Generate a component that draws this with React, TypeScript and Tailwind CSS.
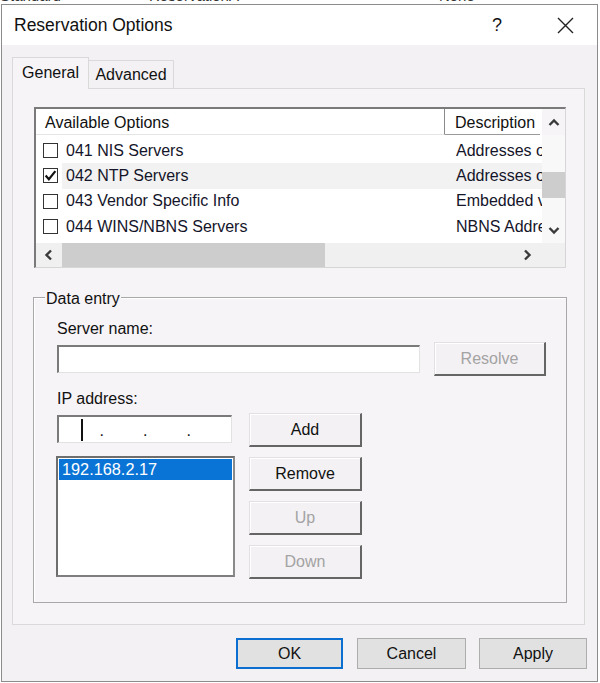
import React from "react";

function Chev({ dir, className = "" }: { dir: "up" | "down" | "left" | "right"; className?: string }) {
  const d =
    dir === "up"
      ? "M1.5 8 L6 3.5 L10.5 8"
      : dir === "down"
      ? "M1.5 4 L6 8.5 L10.5 4"
      : dir === "left"
      ? "M8 1.5 L3.5 6 L8 10.5"
      : "M4 1.5 L8.5 6 L4 10.5";
  return (
    <svg width="12" height="12" viewBox="0 0 12 12" className={className}>
      <path d={d} fill="none" stroke="#3a3a3a" strokeWidth="2.4" />
    </svg>
  );
}

function ClassicBtn({
  children,
  disabled = false,
  w = "w-[113px]",
}: {
  children: React.ReactNode;
  disabled?: boolean;
  w?: string;
}) {
  return (
    <div
      className={`${w} h-[34px] flex items-center justify-center bg-[#f3f1f4] border-t border-l border-t-[#e2e0e3] border-l-[#e2e0e3] border-r-2 border-b-2 border-r-[#656565] border-b-[#656565] shadow-[inset_1px_1px_0_#ffffff] text-[16px] ${
        disabled ? "text-[#a3a3a3]" : "text-[#111111]"
      }`}
    >
      {children}
    </div>
  );
}

function FlatBtn({ children, primary = false, w }: { children: React.ReactNode; primary?: boolean; w: string }) {
  return (
    <div
      className={`${w} h-[31px] flex items-center justify-center bg-[#e1e1e1] text-[16px] text-[#111111] ${
        primary ? "border-2 border-[#0a6fd1]" : "border border-[#adadad]"
      }`}
    >
      {children}
    </div>
  );
}

function CheckBox({ checked = false }: { checked?: boolean }) {
  return (
    <div className="w-[15px] h-[15px] border border-[#333333] bg-white flex items-center justify-center">
      {checked && (
        <svg width="13" height="13" viewBox="0 0 12 12">
          <path d="M1.5 6 L4.5 9.5 L10.5 2" fill="none" stroke="#111111" strokeWidth="2" />
        </svg>
      )}
    </div>
  );
}

const rows = [
  { name: "041 NIS Servers", desc: "Addresses of NIS servers", checked: false, hl: false },
  { name: "042 NTP Servers", desc: "Addresses of NTP servers", checked: true, hl: true },
  { name: "043 Vendor Specific Info", desc: "Embedded vendor-specific options", checked: false, hl: false },
  { name: "044 WINS/NBNS Servers", desc: "NBNS Address(es) in priority order", checked: false, hl: false },
];

export default function App() {
  return (
    <div className="w-[600px] h-[683px] bg-white overflow-hidden font-['Liberation_Sans',Arial,sans-serif] text-[#111111]">
      {/* background app fragments */}
      <div className="h-[4px] overflow-hidden">
        <div className="flex -mt-[12px] text-[15px] leading-[16px] text-[#333333] whitespace-nowrap">
          <span className="ml-[0px]">Standard</span>
          <span className="ml-[88px]">ReservationA</span>
          <span className="ml-[200px]">None</span>
        </div>
      </div>

      {/* dialog */}
      <div className="ml-[1px] w-[597px] h-[678px] border border-[#8c8c8c] flex flex-col bg-[#f3f1f4]">
        {/* title bar */}
        <div className="h-[40px] bg-white flex items-center pl-[12px]">
          <span className="text-[17.5px] text-[#111111]">Reservation Options</span>
          <span className="ml-auto text-[18px] text-[#111111]">?</span>
          <svg width="17" height="17" viewBox="0 0 17 17" className="ml-[55px] mr-[23px]">
            <path d="M1 1 L16 16 M16 1 L1 16" stroke="#222222" strokeWidth="1.4" />
          </svg>
        </div>

        {/* body */}
        <div className="flex-1 flex flex-col pt-[12px] pl-[10px] pr-[10px]">
          {/* tabs */}
          <div className="flex items-end h-[31px]">
            <div className="relative z-10 h-[32px] -mb-[1px] w-[77px] border-t border-l border-r border-[#d9d9d9] bg-[#f6f4f7] flex items-center justify-center text-[16px] pb-[1px]">
              General
            </div>
            <div className="h-[28px] w-[85px] border-t border-r border-[#d9d9d9] bg-[#f3f1f4] flex items-center justify-center text-[16px]">
              Advanced
            </div>
          </div>

          {/* panel */}
          <div className="h-[537px] mr-[2px] border border-[#d9d9d9] bg-[#f6f4f7] flex flex-col">
            {/* list view */}
            <div className="ml-[21px] mt-[18px] w-[532px] h-[161px] border-t-2 border-l-2 border-t-[#7a7a7a] border-l-[#7a7a7a] border-b border-r border-b-[#d6d6d6] border-r-[#d6d6d6] bg-white flex flex-col">
              <div className="flex h-[134px]">
                <div className="w-[506px] flex flex-col overflow-hidden">
                  {/* header */}
                  <div className="h-[26px] flex text-[16px]">
                    <div className="w-[409px] border-r border-r-[#8a8a8a] border-b border-b-[#e4e4e4] flex items-center pl-[9px] pt-[2px]">
                      Available Options
                    </div>
                    <div className="w-[95px] border-b border-b-[#9a9a9a] flex items-center pl-[10px] pt-[2px] whitespace-nowrap overflow-hidden">
                      Description
                    </div>
                  </div>
                  {/* rows */}
                  <div className="mt-[3px] flex flex-col">
                    {rows.map((r) => (
                      <div key={r.name} className="h-[25.3px] flex text-[16px] text-[#15152a]">
                        <div className="w-[26px] flex items-center pl-[7px]">
                          <CheckBox checked={r.checked} />
                        </div>
                        <div className={`flex-1 flex ${r.hl ? "bg-[#f2f2f2]" : ""}`}>
                          <div className="w-[383px] flex items-center pl-[4px] whitespace-nowrap overflow-hidden">
                            {r.name}
                          </div>
                          <div className="w-[97px] flex items-center pl-[11px] whitespace-nowrap overflow-hidden">
                            {r.desc}
                          </div>
                        </div>
                      </div>
                    ))}
                  </div>
                </div>
                {/* vertical scrollbar */}
                <div className="w-[23px] flex flex-col bg-[#f8f8f8]">
                  <div className="h-[26px] flex items-center justify-center bg-[#f6f4f7] pt-[1px]">
                    <Chev dir="up" />
                  </div>
                  <div className="flex-1 flex flex-col">
                    <div className="mt-[37px] h-[26px] bg-[#cdcdcd]" />
                  </div>
                  <div className="h-[27px] flex items-center justify-center">
                    <Chev dir="down" />
                  </div>
                </div>
              </div>
              {/* horizontal scrollbar */}
              <div className="h-[24px] flex bg-[#f0f0f0]">
                <div className="w-[506px] flex">
                  <div className="w-[26px] flex items-center justify-center">
                    <Chev dir="left" />
                  </div>
                  <div className="w-[263px] bg-[#cdcdcd]" />
                  <div className="flex-1" />
                  <div className="w-[30px] flex items-center justify-center">
                    <Chev dir="right" />
                  </div>
                </div>
                <div className="w-[23px] bg-[#f0f0f0]" />
              </div>
            </div>

            {/* group box */}
            <div className="relative ml-[20px] mt-[29px] w-[534px] h-[306px] border border-[#a8a8a8] shadow-[inset_1px_1px_0_#ffffff] flex flex-col pl-[23px]">
              <span className="absolute left-[11px] -top-[8px] px-[1px] bg-[#f6f4f7] text-[16px] leading-[18px]">
                Data entry
              </span>

              <div className="mt-[22px] text-[16px] leading-[18px]">Server name:</div>
              <div className="mt-[4px] h-[34px] flex items-center">
                <div className="w-[363px] h-[28px] bg-white border-t-2 border-l-2 border-t-[#7a7a7a] border-l-[#7a7a7a] border-b border-r border-b-[#e2e2e2] border-r-[#e2e2e2]" />
                <div className="ml-[14px]">
                  <ClassicBtn disabled w="w-[112px]">
                    Resolve
                  </ClassicBtn>
                </div>
              </div>

              <div className="mt-[14px] text-[16px] leading-[18px]">IP address:</div>

              <div className="mt-[5px] flex">
                <div className="-ml-[1px] flex flex-col">
                  <div className="ml-[1px] mt-[2px] w-[175px] h-[28px] bg-white border-t-2 border-l-2 border-t-[#7a7a7a] border-l-[#7a7a7a] border-b border-r border-b-[#e2e2e2] border-r-[#e2e2e2] flex items-center text-[16px] leading-[18px]">
                    <div className="ml-[22px] w-[1.5px] h-[22px] bg-[#111111]" />
                    <span className="ml-[17px] mt-[2px]">.</span>
                    <span className="ml-[39px] mt-[2px]">.</span>
                    <span className="ml-[39px] mt-[2px]">.</span>
                  </div>
                  <div className="mt-[13px] w-[179px] h-[121px] bg-white border-2 border-t-[#6e6e6e] border-l-[#6e6e6e] border-r-[#8a8a8a] border-b-[#7e7e7e] p-[1px]">
                    <div className="h-[21px] bg-[#0a74d6] text-white text-[16.3px] flex items-center pl-[3px]">
                      192.168.2.17
                    </div>
                  </div>
                </div>
                <div className="ml-[14px] flex flex-col gap-[10px]">
                  <ClassicBtn>Add</ClassicBtn>
                  <ClassicBtn>Remove</ClassicBtn>
                  <ClassicBtn disabled>Up</ClassicBtn>
                  <ClassicBtn disabled>Down</ClassicBtn>
                </div>
              </div>
            </div>
          </div>

          {/* bottom buttons */}
          <div className="mt-[13px] flex justify-end">
            <FlatBtn primary w="w-[107px]">
              OK
            </FlatBtn>
            <div className="ml-[14px]">
              <FlatBtn w="w-[109px]">Cancel</FlatBtn>
            </div>
            <div className="ml-[13px]">
              <FlatBtn w="w-[108px]">Apply</FlatBtn>
            </div>
          </div>
        </div>
      </div>
    </div>
  );
}
